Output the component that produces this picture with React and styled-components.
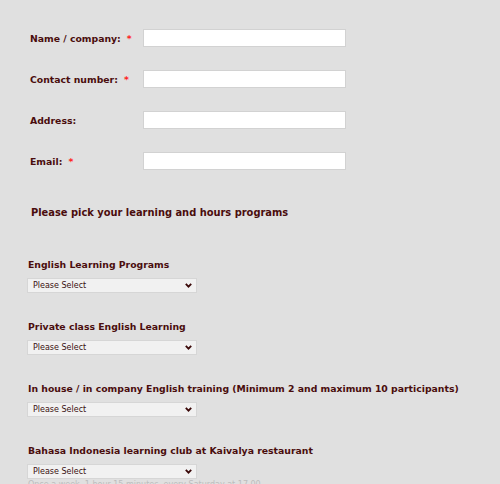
import React from "react";
import styled, { createGlobalStyle } from "styled-components";

const Global = createGlobalStyle`
  html, body { margin: 0; padding: 0; background: #e0e0e0; }
  body { font-family: "DejaVu Sans", Verdana, sans-serif; color: #4a0d0d; }
`;

const Page = styled.div`
  padding: 29px 0 0 27px;
  height: 484px;
  box-sizing: border-box;
  overflow: hidden;
`;

const Fields = styled.div`
  display: flex;
  flex-direction: column;
  gap: 23px;
  padding-left: 3px;
`;

const Row = styled.div`
  display: flex;
  align-items: center;
  height: 18px;
`;

const Label = styled.label`
  width: 113px;
  font-size: 9.3px;
  font-weight: bold;
  white-space: nowrap;
`;

const Star = styled.span`
  color: #ff2020;
  margin-left: 6px;
`;

const TextInput = styled.input`
  width: 203px;
  height: 18px;
  box-sizing: border-box;
  border: 1px solid #d2d2d2;
  background: #fff;
  margin: 0;
  padding: 0 4px;
  outline: none;
`;

const Heading = styled.h3`
  margin: 36px 0 0 4px;
  font-size: 9.9px;
  line-height: 14px;
  font-weight: bold;
  white-space: nowrap;
`;

const Groups = styled.div`
  margin-top: 39px;
  display: flex;
  flex-direction: column;
  gap: 28px;
`;

const Group = styled.div`
  display: flex;
  flex-direction: column;
  gap: 7px;
`;

const GroupTitle = styled.div`
  font-size: 9.3px;
  line-height: 12px;
  font-weight: bold;
  margin-left: 1px;
  white-space: nowrap;
`;

const SelectWrap = styled.div`
  position: relative;
  width: 170px;
  height: 15px;
`;

const Select = styled.select`
  appearance: none;
  display: block;
  width: 170px;
  height: 15px;
  box-sizing: border-box;
  border: 1px solid #d6d6d6;
  border-radius: 0;
  background: #f1f1f1;
  font-family: "DejaVu Sans", Verdana, sans-serif;
  font-size: 8px;
  color: #3a1010;
  padding: 0 0 0 5px;
  margin: 0;
`;

const Chevron = styled.svg`
  position: absolute;
  right: 5px;
  top: 5px;
  pointer-events: none;
`;

const Note = styled.div`
  font-size: 8px;
  line-height: 10px;
  color: #bdbdbd;
  margin-top: -6px;
  margin-left: 1px;
  white-space: nowrap;
`;

const fields = [
  { label: "Name / company:", req: true },
  { label: "Contact number:", req: true },
  { label: "Address:", req: false },
  { label: "Email:", req: true },
];

const groups = [
  "English Learning Programs",
  "Private class English Learning",
  "In house / in company English training (Minimum 2 and maximum 10 participants)",
  "Bahasa Indonesia learning club at Kaivalya restaurant",
];

function Dropdown() {
  return (
    <SelectWrap>
      <Select defaultValue="">
        <option value="">Please Select</option>
      </Select>
      <Chevron width="7" height="5" viewBox="0 0 7 5">
        <path d="M0.8 0.8 L3.5 3.6 L6.2 0.8" fill="none" stroke="#3a0808" strokeWidth="1.8" />
      </Chevron>
    </SelectWrap>
  );
}

export default function App() {
  return (
    <>
      <Global />
      <Page>
        <Fields>
          {fields.map((f) => (
            <Row key={f.label}>
              <Label>
                {f.label}
                {f.req && <Star>*</Star>}
              </Label>
              <TextInput type="text" />
            </Row>
          ))}
        </Fields>
        <Heading>Please pick your learning and hours programs</Heading>
        <Groups>
          {groups.map((g, i) => (
            <Group key={g}>
              <GroupTitle>{g}</GroupTitle>
              <Dropdown />
              {i === 3 && <Note>Once a week, 1 hour 15 minutes, every Saturday at 17.00</Note>}
            </Group>
          ))}
        </Groups>
      </Page>
    </>
  );
}
